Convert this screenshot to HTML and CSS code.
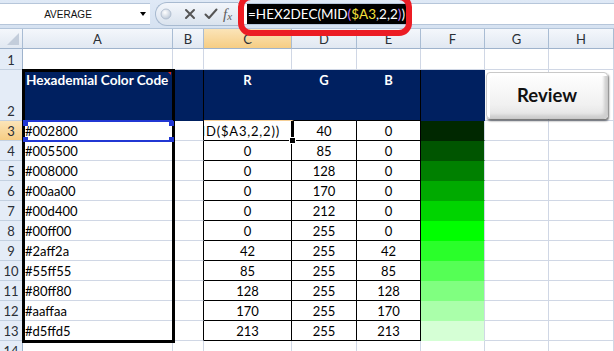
FILE: index.html
```html
<!DOCTYPE html>
<html>
<head>
<meta charset="utf-8">
<link rel="stylesheet" href="styles.css">
</head>
<body>
<div class="app">
  <div class="fbar">
    <div class="namebox"><span class="nm">AVERAGE</span><span class="dd"></span></div>
    <div class="pill">
      <svg class="grip" width="12" height="12" viewBox="0 0 12 12"><defs><radialGradient id="g" cx="0.4" cy="0.35" r="0.7"><stop offset="0" stop-color="#ffffff"/><stop offset="1" stop-color="#b9c6d6"/></radialGradient></defs><circle cx="6" cy="6" r="5" fill="url(#g)" stroke="#aab8ca" stroke-width="0.8"/></svg>
      <svg class="ico" width="12" height="12" viewBox="0 0 12 12"><path d="M2 2 L10 10 M10 2 L2 10" stroke="#555" stroke-width="2" stroke-linecap="round"/></svg>
      <svg class="ico" width="14" height="12" viewBox="0 0 14 12"><path d="M1.5 6.5 L5 10 L12.5 1.5" fill="none" stroke="#555" stroke-width="2" stroke-linecap="round" stroke-linejoin="round"/></svg>
      <span class="fx"><i>f</i><i class="x">x</i></span>
    </div>
    <div class="formula"><span class="hl">=HEX2DEC<span>(</span>MID<span class="pp">(</span><span class="yy">$A3</span>,2,2<span class="pp">)</span>)</span></div>
  </div>

  <div class="sheet">
    <div class="ch corner"><svg width="22" height="19" viewBox="0 0 22 19"><polygon points="19,4 19,16 7,16" fill="#c3cddb"/></svg></div>
    <div class="ch">A</div><div class="ch">B</div><div class="ch on">C</div><div class="ch">D</div><div class="ch">E</div><div class="ch">F</div><div class="ch">G</div><div class="ch">H</div>

    <div class="rh">1</div><div class="c"></div><div class="c"></div><div class="c"></div><div class="c"></div><div class="c"></div><div class="c"></div><div class="c"></div><div class="c"></div>

    <div class="rh">2</div>
    <div class="c nv top hd wide">Hexademial Color Code<span class="cmt"></span></div>
    <div class="c nv bk"></div>
    <div class="c nv top hd mid bb">R</div>
    <div class="c nv top hd mid bb">G</div>
    <div class="c nv top hd mid bb bk">B</div>
    <div class="c nv"></div>
    <div class="c"></div><div class="c"></div>

    <div class="rh on">3</div><div class="c txt">#002800</div><div class="c bk"></div><div class="c tb ovf"><span>=HEX2DEC(MID($A3,2,2))</span></div><div class="c tb mid">40</div><div class="c tb mid">0</div><div class="c sw" style="background:#002800"></div><div class="c"></div><div class="c"></div>
    <div class="rh">4</div><div class="c txt">#005500</div><div class="c bk"></div><div class="c tb mid">0</div><div class="c tb mid">85</div><div class="c tb mid">0</div><div class="c sw" style="background:#005500"></div><div class="c"></div><div class="c"></div>
    <div class="rh">5</div><div class="c txt">#008000</div><div class="c bk"></div><div class="c tb mid">0</div><div class="c tb mid">128</div><div class="c tb mid">0</div><div class="c sw" style="background:#008000"></div><div class="c"></div><div class="c"></div>
    <div class="rh">6</div><div class="c txt">#00aa00</div><div class="c bk"></div><div class="c tb mid">0</div><div class="c tb mid">170</div><div class="c tb mid">0</div><div class="c sw" style="background:#00aa00"></div><div class="c"></div><div class="c"></div>
    <div class="rh">7</div><div class="c txt">#00d400</div><div class="c bk"></div><div class="c tb mid">0</div><div class="c tb mid">212</div><div class="c tb mid">0</div><div class="c sw" style="background:#00d400"></div><div class="c"></div><div class="c"></div>
    <div class="rh">8</div><div class="c txt">#00ff00</div><div class="c bk"></div><div class="c tb mid">0</div><div class="c tb mid">255</div><div class="c tb mid">0</div><div class="c sw" style="background:#00ff00"></div><div class="c"></div><div class="c"></div>
    <div class="rh">9</div><div class="c txt">#2aff2a</div><div class="c bk"></div><div class="c tb mid">42</div><div class="c tb mid">255</div><div class="c tb mid">42</div><div class="c sw" style="background:#2aff2a"></div><div class="c"></div><div class="c"></div>
    <div class="rh">10</div><div class="c txt">#55ff55</div><div class="c bk"></div><div class="c tb mid">85</div><div class="c tb mid">255</div><div class="c tb mid">85</div><div class="c sw" style="background:#55ff55"></div><div class="c"></div><div class="c"></div>
    <div class="rh">11</div><div class="c txt">#80ff80</div><div class="c bk"></div><div class="c tb mid">128</div><div class="c tb mid">255</div><div class="c tb mid">128</div><div class="c sw" style="background:#80ff80"></div><div class="c"></div><div class="c"></div>
    <div class="rh">12</div><div class="c txt">#aaffaa</div><div class="c bk"></div><div class="c tb mid">170</div><div class="c tb mid">255</div><div class="c tb mid">170</div><div class="c sw" style="background:#aaffaa"></div><div class="c"></div><div class="c"></div>
    <div class="rh">13</div><div class="c txt">#d5ffd5</div><div class="c bk"></div><div class="c tb mid">213</div><div class="c tb mid">255</div><div class="c tb mid">213</div><div class="c sw" style="background:#d5ffd5"></div><div class="c"></div><div class="c"></div>
    <div class="rh">14</div><div class="c"></div><div class="c"></div><div class="c"></div><div class="c"></div><div class="c"></div><div class="c"></div><div class="c"></div><div class="c"></div>
  </div>

  <div class="rangebox"></div>
  <div class="refbox"><i class="sq tl"></i><i class="sq tr"></i><i class="sq bl"></i><i class="sq br"></i></div>
  <div class="active"><i class="handle"></i></div>
  <div class="btn"><span>Review</span></div>
  <div class="anno"></div>
</div>
</body>
</html>
```

FILE: styles.css
```css
html, body {
  margin: 0;
  padding: 0;
}
body {
  width: 614px;
  height: 351px;
  overflow: hidden;
  background: #fff;
  font-family: Lato, "Liberation Sans", sans-serif;
}
.app {
  position: relative;
  width: 614px;
  height: 351px;
  overflow: hidden;
}

/* formula bar */
.fbar {
  display: flex;
  align-items: center;
  height: 29px;
  box-sizing: border-box;
  background: linear-gradient(#dfe9f6, #d6e2f1);
  border-bottom: 1px solid #b3c5da;
}
.namebox {
  width: 150px;
  height: 22px;
  background: #fff;
  display: flex;
  align-items: center;
  border-top: 1px solid #b6c6da;
  border-bottom: 1px solid #b6c6da;
  box-sizing: border-box;
}
.nm {
  flex: 1;
  text-align: center;
  font: 10px "Liberation Sans", sans-serif;
  color: #111;
  padding-left: 2px;
}
.dd {
  width: 0;
  height: 0;
  border-left: 3.5px solid transparent;
  border-right: 3.5px solid transparent;
  border-top: 4px solid #000;
  margin-right: 4px;
  margin-left: 6px;
}
.pill {
  margin-left: 5px;
  width: 83px;
  height: 24px;
  box-sizing: border-box;
  border: 1px solid #a8bad0;
  border-right: none;
  border-radius: 12px 0 0 12px;
  background: linear-gradient(#f3f6fb, #dae3ee);
  display: flex;
  align-items: center;
  padding-left: 4px;
  gap: 8px;
}
.grip {
  margin-right: 4px;
}
.fx {
  font-family: "Liberation Serif", serif;
  font-size: 15px;
  color: #5e5e5e;
  line-height: 1;
  margin-left: -3px;
}
.fx .x {
  font-size: 11px;
  position: relative;
  top: 1px;
}
.formula {
  flex: 1;
  height: 22px;
  background: #fff;
  border-top: 1px solid #b6c6da;
  border-bottom: 1px solid #b6c6da;
  box-sizing: border-box;
  display: flex;
  align-items: stretch;
  padding-left: 9px;
}
.hl {
  background: #000;
  color: #fff;
  font-size: 13.5px;
  line-height: 20px;
  padding: 0 1px;
  white-space: nowrap;
}
.hl .pp { color: #c77dff; }
.hl .yy { color: #f4e23c; }

/* sheet */
.sheet {
  display: grid;
  grid-template-columns: 23px 150px 31px 88px 65px 64px 64px 64px 65px;
  grid-template-rows: 20px 21px 51px repeat(12, 20px);
  font-size: 13px;
  color: #000;
}
.sheet > div {
  box-sizing: border-box;
  border-right: 1px solid #d0d7e5;
  border-bottom: 1px solid #d0d7e5;
  display: flex;
  align-items: flex-end;
  line-height: 18px;
  white-space: nowrap;
  position: relative;
}
.sheet > .ch {
  background: linear-gradient(#f4f7fb, #e1e8f2);
  border-right-color: #a9bcd3;
  border-bottom-color: #9fb3cc;
  justify-content: center;
  align-items: center;
  color: #2a2f36;
  font-size: 13px;
}
.sheet > .ch.on,
.sheet > .rh.on {
  background: linear-gradient(#fbe4b8, #f6cd84);
}
.sheet > .corner {
  padding: 0;
  align-items: stretch;
}
.sheet > .rh {
  background: #e4ecf7;
  border-right-color: #9fb3cc;
  border-bottom-color: #c3d0e0;
  justify-content: center;
  color: #2a2f36;
  font-size: 13px;
}
.sheet > .txt {
  padding-left: 2px;
}
.sheet > .mid {
  justify-content: center;
}
.sheet > .nv {
  background: #002060;
  border-right-color: #002060;
  border-bottom-color: #002060;
}
.sheet > .top {
  align-items: flex-start;
  padding-top: 1px;
}
.sheet > .hd {
  color: #fff;
  font-weight: bold;
  padding-left: 3px;
}
.sheet > .hd.wide {
  font-size: 13.6px;
}
.sheet > .hd.mid {
  padding-left: 0;
}
.sheet > .bk {
  border-right-color: #000;
}
.sheet > .bb {
  border-bottom-color: #000;
}
.sheet > .tb {
  border-right-color: #000;
  border-bottom-color: #000;
}
.sheet > .sw {
  border-bottom-color: transparent;
}
.sheet > .ovf {
  justify-content: flex-end;
  overflow: hidden;
  padding-right: 11px;
  letter-spacing: 0.8px;
}
.cmt {
  position: absolute;
  right: 1px;
  top: 0;
  width: 0;
  height: 0;
  border-top: 5px solid #e3261c;
  border-left: 5px solid transparent;
}

/* overlays */
.rangebox {
  position: absolute;
  left: 22px;
  top: 69px;
  width: 153px;
  height: 274px;
  box-sizing: border-box;
  border: 3px solid #000;
}
.refbox {
  position: absolute;
  left: 23px;
  top: 120px;
  width: 150px;
  height: 22px;
  box-sizing: border-box;
  border-top: 2px solid #2137d3;
  border-bottom: 2px solid #2137d3;
}
.sq {
  position: absolute;
  width: 5px;
  height: 5px;
  background: #2137d3;
}
.sq.tl { left: 0; top: -1px; }
.sq.tr { right: -1px; top: -1px; }
.sq.bl { left: 0; bottom: -2px; }
.sq.br { right: -1px; bottom: -2px; }
.active {
  position: absolute;
  left: 204px;
  top: 120px;
  width: 90px;
  height: 21px;
  box-sizing: border-box;
  border-top: 1px solid #f5cf96;
  border-right: 2px solid #000;
}
.handle {
  position: absolute;
  right: -4px;
  bottom: -3px;
  width: 5px;
  height: 5px;
  background: #000;
  border: 1px solid #fff;
}
.btn {
  position: absolute;
  left: 486px;
  top: 72px;
  width: 122px;
  height: 47px;
  box-sizing: border-box;
  border: 1px solid #c9c9c9;
  border-radius: 4px;
  background: linear-gradient(#ffffff, #f1f1f1 70%, #e2e2e2);
  box-shadow: inset 4px 4px 0 -1px #ffffff, inset -4px -4px 3px -1px #cfcfcf, 1px 2px 2px rgba(0,0,0,0.55);
  display: flex;
  align-items: center;
  justify-content: center;
}
.btn span {
  font-family: Lato, "Liberation Sans", sans-serif;
  font-weight: bold;
  font-size: 18.5px;
  color: #111;
  margin-top: -1px;
}
.anno {
  position: absolute;
  left: 238px;
  top: -6px;
  width: 174px;
  height: 42px;
  box-sizing: border-box;
  border: 6px solid #ec1c24;
  border-radius: 13px;
}
```
